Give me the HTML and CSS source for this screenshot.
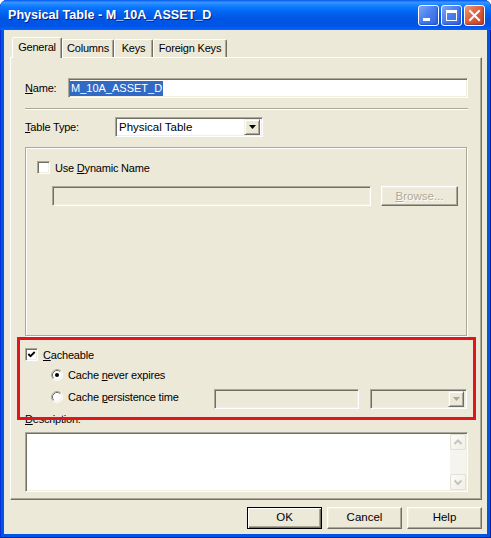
FILE: index.html
```html
<!DOCTYPE html>
<html>
<head>
<meta charset="utf-8">
<title>Physical Table - M_10A_ASSET_D</title>
<link rel="stylesheet" href="styles.css">
</head>
<body>
<div class="window">
  <div class="titlebar">
    <span class="title">Physical Table - M_10A_ASSET_D</span>
    <div class="tbtns">
      <span class="tb"><svg width="19" height="19" viewBox="0 0 19 19"><rect x="4" y="12" width="7" height="3" fill="#fff"/></svg></span>
      <span class="tb"><svg width="19" height="19" viewBox="0 0 19 19"><rect x="4.5" y="4.5" width="10" height="10" fill="none" stroke="#fff"/><rect x="4" y="4" width="11" height="3" fill="#fff"/></svg></span>
      <span class="tb close"><svg width="19" height="19" viewBox="0 0 19 19"><path d="M5 5L14 14M14 5L5 14" stroke="#fff" stroke-width="2" stroke-linecap="square"/></svg></span>
    </div>
  </div>
  <div class="client">
    <div class="tabs">
      <div class="tab active t-general">General</div>
      <div class="tab t-columns">Columns</div>
      <div class="tab t-keys">Keys</div>
      <div class="tab t-fk">Foreign Keys</div>
    </div>
    <div class="panel">
      <div class="row">
        <span class="lbl lbl-name"><u>N</u>ame:</span>
        <div class="field name-field"><span class="sel">M_10A_ASSET_D</span></div>
      </div>
      <div class="sep"></div>
      <div class="row row-type">
        <span class="lbl lbl-type"><u>T</u>able Type:</span>
        <div class="field combo">
          <span class="combo-text">Physical Table</span>
          <span class="drop"><svg width="7" height="4" viewBox="0 0 7 4"><path d="M0 0H7L3.5 4Z" fill="#000"/></svg></span>
        </div>
      </div>
      <div class="group">
        <div class="chk-row">
          <span class="chk"></span>
          <span>Use <u>D</u>ynamic Name</span>
        </div>
        <div class="dyn-row">
          <div class="field disabled dyn-field"></div>
          <div class="btn disabled-btn browse"><span><u>B</u>rowse...</span></div>
        </div>
      </div>
      <div class="cache">
        <div class="chk-row">
          <span class="chk"><svg width="11" height="11" viewBox="0 0 11 11"><path d="M2.3 5L4.5 7.2L8.7 3" fill="none" stroke="#000" stroke-width="1.8"/></svg></span>
          <span><u>C</u>acheable</span>
        </div>
        <div class="radio-row r1">
          <svg class="radio" width="12" height="12" viewBox="0 0 12 12"><circle cx="6" cy="6" r="5" fill="#fff"/><path d="M2.11 9.89A5.5 5.5 0 0 1 9.89 2.11" stroke="#ACA899" fill="none"/><path d="M9.89 2.11A5.5 5.5 0 0 1 2.11 9.89" stroke="#fff" fill="none"/><path d="M2.82 9.18A4.5 4.5 0 0 1 9.18 2.82" stroke="#716F64" fill="none"/><path d="M9.18 2.82A4.5 4.5 0 0 1 2.82 9.18" stroke="#F1EFE2" fill="none"/><circle cx="6" cy="6" r="2" fill="#000"/></svg>
          <span>Cache <u>n</u>ever expires</span>
        </div>
        <div class="r2">
          <div class="radio-row r2-label">
            <svg class="radio" width="12" height="12" viewBox="0 0 12 12"><circle cx="6" cy="6" r="5" fill="#fff"/><path d="M2.11 9.89A5.5 5.5 0 0 1 9.89 2.11" stroke="#ACA899" fill="none"/><path d="M9.89 2.11A5.5 5.5 0 0 1 2.11 9.89" stroke="#fff" fill="none"/><path d="M2.82 9.18A4.5 4.5 0 0 1 9.18 2.82" stroke="#716F64" fill="none"/><path d="M9.18 2.82A4.5 4.5 0 0 1 2.82 9.18" stroke="#F1EFE2" fill="none"/></svg>
            <span>Cache <u>p</u>ersistence time</span>
          </div>
          <div class="field disabled time-field"></div>
          <div class="field disabled unit-combo">
            <span class="drop drop-dis"><svg width="7" height="4" viewBox="0 0 7 4"><path d="M0 0H7L3.5 4Z" fill="#ACA899"/></svg></span>
          </div>
        </div>
      </div>
      <div class="desc-label"><u>D</u>escription:</div>
      <div class="field textarea">
        <div class="scrollbar">
          <span class="sbtn"><svg width="14" height="14" viewBox="0 0 14 14"><path d="M3.5 9L7 5.5L10.5 9" fill="none" stroke="#C6C5BA" stroke-width="2"/></svg></span>
          <span class="sbtn"><svg width="14" height="14" viewBox="0 0 14 14"><path d="M3.5 5.5L7 9L10.5 5.5" fill="none" stroke="#C6C5BA" stroke-width="2"/></svg></span>
        </div>
      </div>
      <div class="annot"></div>
    </div>
    <div class="buttons">
      <div class="btn default">OK</div>
      <div class="btn">Cancel</div>
      <div class="btn">Help</div>
    </div>
  </div>
</div>
</body>
</html>
```

FILE: styles.css
```css
html, body {
  margin: 0;
  padding: 0;
  background: #ffffff;
}

body {
  font-family: "Liberation Sans", Arial, sans-serif;
  font-size: 11px;
  color: #000;
  letter-spacing: -0.2px;
}

.window {
  width: 491px;
  height: 538px;
  box-sizing: border-box;
  background: #0055E5;
  border-radius: 7px 7px 0 0;
  display: flex;
  flex-direction: column;
  box-shadow: inset 1px 0 #0831D9, inset -1px 0 #001EA0, inset 0 -1px #001EA0;
  overflow: hidden;
}

.titlebar {
  height: 30px;
  flex: none;
  display: flex;
  align-items: center;
  padding: 0 6px 0 8px;
  border-radius: 7px 7px 0 0;
  background: linear-gradient(to bottom, #0058EE 0%, #3A93FF 8%, #288EFF 12%, #127DFF 20%, #036FFC 32%, #0262EE 44%, #0057E5 60%, #0054E3 76%, #0055EB 88%, #005BF5 94%, #026AFE 100%);
}

.title {
  flex: 1;
  color: #fff;
  font-weight: bold;
  font-size: 12.6px;
  letter-spacing: 0;
  text-shadow: 1px 1px #0A1E80;
}

.tbtns {
  display: flex;
  gap: 2px;
}

.tb {
  width: 19px;
  height: 19px;
  border: 1px solid #fff;
  border-radius: 3px;
  display: block;
  background: linear-gradient(135deg, #7FA6F7 0%, #4A7FEE 45%, #3366E0 100%);
  box-shadow: inset -1px -1px 2px rgba(0, 30, 140, 0.4);
}

.tb svg {
  display: block;
}

.tb.close {
  background: linear-gradient(135deg, #F29B7A 0%, #E2603A 45%, #C7421E 100%);
}

.client {
  flex: none;
  height: 504px;
  margin: 0 4px 4px;
  background: #ECE9D8;
  padding: 7px 0 0 6px;
  box-sizing: border-box;
}

.tabs {
  display: flex;
  align-items: flex-end;
  height: 20px;
  margin-left: 2px;
  position: relative;
  z-index: 2;
}

.tab {
  box-sizing: border-box;
  height: 18px;
  display: flex;
  align-items: center;
  justify-content: center;
  border-top: 1px solid #fff;
  border-left: 1px solid #fff;
  border-right: 1px solid #716F64;
  box-shadow: inset -1px 0 #ACA899;
  border-radius: 2px 2px 0 0;
  background: #ECE9D8;
  padding-bottom: 1px;
}

.tab.active {
  height: 21px;
  margin-bottom: -1px;
  padding-bottom: 3px;
}

.t-general { width: 50px; }
.t-columns { width: 52px; }
.t-keys { width: 39px; }
.t-fk { width: 74px; }

.panel {
  position: relative;
  box-sizing: border-box;
  width: 472px;
  height: 443px;
  border: 1px solid;
  border-color: #fff #716F64 #716F64 #fff;
  box-shadow: inset -1px -1px #ACA899;
  padding: 20px 13px 0 14px;
}

.row {
  display: flex;
  align-items: center;
  height: 20px;
}

.lbl-name { width: 43px; }
.lbl-type { width: 90px; }

.field {
  box-sizing: border-box;
  height: 20px;
  border: 1px solid;
  border-color: #ACA899 #fff #fff #ACA899;
  box-shadow: inset 1px 1px #716F64, inset -1px -1px #F1EFE2;
  background: #fff;
}

.name-field {
  width: 400px;
  display: flex;
  align-items: center;
  padding-left: 1px;
}

.sel {
  background: #316AC5;
  color: #fff;
  line-height: 15px;
  padding: 0 1px;
  letter-spacing: 0;
}

.sep {
  margin-top: 10px;
  width: 443px;
  border-top: 1px solid #ACA899;
  border-bottom: 1px solid #fff;
}

.row-type { margin-top: 7px; }

.combo {
  width: 148px;
  display: flex;
  align-items: center;
  padding: 0 2px 0 3px;
}

.combo-text {
  flex: 1;
  font-size: 11.5px;
  letter-spacing: 0;
}

.drop {
  box-sizing: border-box;
  width: 16px;
  height: 16px;
  display: flex;
  align-items: center;
  justify-content: center;
  border: 1px solid;
  border-color: #F1EFE2 #716F64 #716F64 #F1EFE2;
  box-shadow: inset 1px 1px #fff, inset -1px -1px #ACA899;
  background: #ECE9D8;
}

.drop svg { display: block; }

.group {
  margin-top: 10px;
  box-sizing: border-box;
  width: 442px;
  height: 189px;
  border: 1px solid #ACA899;
  box-shadow: inset 1px 1px #fff, 1px 1px #fff;
  padding: 13px 0 0 11px;
}

.chk-row {
  display: flex;
  align-items: center;
  gap: 5px;
  height: 13px;
}

.chk {
  flex: none;
  box-sizing: border-box;
  width: 13px;
  height: 13px;
  border: 1px solid;
  border-color: #ACA899 #fff #fff #ACA899;
  box-shadow: inset 1px 1px #716F64, inset -1px -1px #F1EFE2;
  background: #fff;
}

.chk svg { display: block; }

.dyn-row {
  display: flex;
  margin-top: 12px;
  margin-left: 15px;
}

.disabled {
  background: #ECE9D8;
}

.dyn-field { width: 319px; }

.btn {
  box-sizing: border-box;
  width: 75px;
  height: 22px;
  display: flex;
  align-items: center;
  justify-content: center;
  padding-bottom: 2px;
  border: 1px solid;
  border-color: #fff #716F64 #716F64 #fff;
  box-shadow: inset -1px -1px #ACA899, inset 1px 1px #F1EFE2;
  background: #ECE9D8;
  font-size: 11.5px;
  letter-spacing: 0;
}

.browse {
  width: 77px;
  height: 20px;
  margin-left: 10px;
  padding-bottom: 1px;
}

.disabled-btn span {
  color: #ACA899;
  text-shadow: 1px 1px #fff;
}

.cache {
  margin-top: 12px;
}

.radio-row {
  display: flex;
  align-items: center;
  gap: 5px;
  height: 13px;
}

.radio {
  flex: none;
  display: block;
}

.r1 {
  margin-top: 7px;
  margin-left: 26px;
}

.r2 {
  display: flex;
  margin-top: 8px;
  height: 20px;
}

.r2-label {
  width: 163px;
  margin-left: 26px;
  margin-top: 1px;
}

.time-field { width: 145px; }

.unit-combo {
  width: 97px;
  margin-left: 11px;
  display: flex;
  justify-content: flex-end;
  align-items: center;
  padding-right: 2px;
}

.desc-label {
  margin-top: 4px;
  height: 13px;
  line-height: 13px;
}

.textarea {
  margin-top: 6px;
  width: 443px;
  height: 60px;
  padding: 1px;
  display: flex;
  justify-content: flex-end;
}

.scrollbar {
  width: 16px;
  height: 56px;
  background: #F5F4EE;
  display: flex;
  flex-direction: column;
  justify-content: space-between;
}

.sbtn {
  box-sizing: border-box;
  width: 16px;
  height: 16px;
  border: 1px solid #E2E1D6;
  border-radius: 2px;
  background: linear-gradient(135deg, #FBFBF8 0%, #F0EFE8 100%);
  display: flex;
  align-items: center;
  justify-content: center;
}

.sbtn svg { display: block; }

.annot {
  position: absolute;
  left: 6px;
  top: 279px;
  width: 459px;
  height: 83px;
  box-sizing: border-box;
  border: 3px solid #E3141C;
  pointer-events: none;
}

.buttons {
  display: flex;
  justify-content: flex-end;
  gap: 5px;
  margin-top: 7px;
  padding-right: 5px;
}

.btn.default {
  border: 1px solid #000;
  box-shadow: inset 1px 1px #fff, inset -1px -1px #716F64, inset -2px -2px #ACA899;
}
```
